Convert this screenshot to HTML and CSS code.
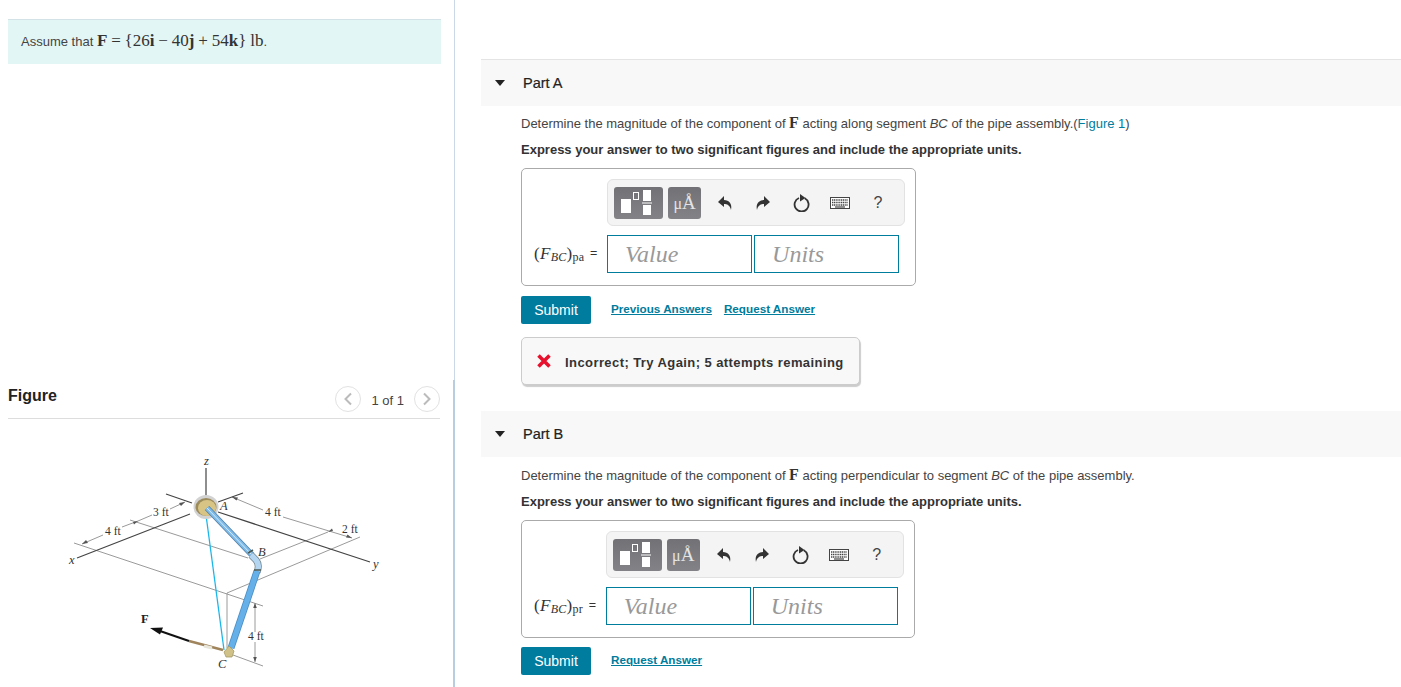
FILE: index.html
```html
<!DOCTYPE html>
<html lang="en">
<head>
<meta charset="utf-8">
<title>Part A and Part B</title>
<link rel="stylesheet" href="styles.css">
</head>
<body>
<div class="page">
  <aside class="left">
    <section class="intro">
      <div class="assume">Assume that <span class="math"><b>F</b> <span class="op">=</span> {26<b>i</b> <span class="op">−</span> 40<b>j</b> <span class="op">+</span> 54<b>k</b>} lb</span>.</div>
    </section>
    <section class="figure">
      <header class="fig-head">
        <h2>Figure</h2>
        <div class="pager">
          <span class="circle"><svg width="10" height="14" viewBox="0 0 10 14"><path d="M8 1.500 2.500 7 8 12.500" fill="none" stroke="#bbb" stroke-width="2"/></svg></span>
          <span class="count">1 of 1</span>
          <span class="circle"><svg width="10" height="14" viewBox="0 0 10 14"><path d="M2 1.500 7.500 7 2 12.500" fill="none" stroke="#bbb" stroke-width="2"/></svg></span>
        </div>
      </header>
      <svg class="diagram" width="432" height="247" viewBox="8 0 432 247">
        <g fill="none" stroke="#9a9a9a" stroke-width="1">
          <path d="M74 103 263 166M130 80 248 118M233 215 263 226M260 119 328 92M227 153 360 97M227 153V208"/>
          <path d="M82 104 103 95M122 87 138 81 152 75M170 69 185 62M232 57 263 70M283 77 352 98M255 163V192M255 202V222"/>
        </g>
        <path d="M82 104l6-1-2-3zM352 98l-6-.5 1.500-3zM232 57l6 .5-1.500 3zM185 62l-6 1 2 3zM255 163l-1.800 5h3.600zM255 222l-1.800-5h3.600zM138 81l-5 1 1 2.500zM328 92l5-1-1-2.500z" fill="#555"/>
        <g fill="none" stroke="#444" stroke-width="1.200">
          <path d="M206 28V57M166 54 192 63M218 72 370 122M77 118 190 74M218 62 243 53"/>
        </g>
        <path d="M206 75 224 210" stroke="#1cb6ea" stroke-width="1.300" fill="none"/>
        <ellipse cx="206" cy="67" rx="12.500" ry="12" fill="#d2d2d2"/>
        <ellipse cx="206" cy="67" rx="10.500" ry="9" fill="#9c8c5c"/>
        <ellipse cx="207" cy="68" rx="9" ry="8" fill="#d8c585"/>
        <path d="M207 68 252 115" stroke="#4d7da6" stroke-width="6" fill="none"/>
        <path d="M207 68 252 115" stroke="#7fbbe8" stroke-width="4.600" fill="none"/>
        <path d="M207 68 252 115" stroke="#d4e9f8" stroke-width="1" fill="none"/>
        <path d="M251 115 256 120Q260 125 257 132" stroke="#6d7f88" stroke-width="7" fill="none"/>
        <path d="M251 115 256 120Q260 125 257 132" stroke="#b4d6f1" stroke-width="5.600" fill="none"/>
        <path d="M257 131 231 208" stroke="#4a8dc4" stroke-width="7" fill="none"/>
        <path d="M257 131 231 208" stroke="#66b0ea" stroke-width="5.400" fill="none"/>
        <path d="M254 130h7M248 113l5-3" stroke="#4b5a52" stroke-width="1.600"/>
        <path d="M223 210 189 201" stroke="#a0845c" stroke-width="2.500" fill="none"/>
        <path d="M212 208 204 206" stroke="#e8e6da" stroke-width="3" fill="none"/>
        <path d="M189 201 160 191" stroke="#111" stroke-width="2" fill="none"/>
        <path d="M150 188l13-.5-3 7z" fill="#111"/>
        <path d="M224 212l5-6 5 5-2 6-6 0z" fill="#cfc188" stroke="#a69a66" stroke-width=".8"/>
        <g class="fig-label">
          <text x="153" y="76">3 ft</text>
          <text x="105" y="95">4 ft</text>
          <text x="265" y="76">4 ft</text>
          <text x="342" y="93">2 ft</text>
          <text x="248" y="200">4 ft</text>
        </g>
        <g class="fig-var">
          <text x="204" y="25">z</text>
          <text x="220" y="70">A</text>
          <text x="258" y="116">B</text>
          <text x="218" y="228">C</text>
          <text x="69" y="124">x</text>
          <text x="373" y="128">y</text>
        </g>
        <text class="fig-bold" x="141" y="183">F</text>
      </svg>
    </section>
  </aside>

  <main class="right">
    <section class="part">
      <header class="part-head"><span class="tri"></span><h3>Part A</h3></header>
      <div class="part-body">
        <p class="q">Determine the magnitude of the component of <b class="mb">F</b> acting along segment <i>BC</i> of the pipe assembly.(<a class="fig-link" href="#">Figure 1</a>)</p>
        <p class="q strong">Express your answer to two significant figures and include the appropriate units.</p>
        <div class="answer">
          <div></div>
          <div class="toolbar">
            <span class="tbtn t1"><svg width="49" height="32" viewBox="0 0 49 32"><path fill="#fff" d="M7 12h10v14H7zM29 3h8v11H29zM29 18h8v10H29z"/><path fill="#fff" d="M19 5h6v8h-6zM20 6v6h4V6z" fill-rule="evenodd"/><path stroke="#fff" d="M28 16h10"/></svg></span>
            <span class="tbtn t2"><span class="mu">μ</span>Å</span>
            <span class="tools">
              <svg width="16" height="16" viewBox="1 0 16 16"><path fill="#333" d="M7 1 1 7l6 5V9c3 0 6 1 7 6 1.500-6-2-10-7-10z"/></svg>
              <svg width="16" height="16" viewBox="1 0 16 16"><path fill="#333" d="M9 1l6 6-6 5V9c-3 0-6 1-7 6-1.500-6 2-10 7-10z"/></svg>
              <svg width="18" height="18" viewBox="0 0 18 18"><path fill="none" stroke="#333" stroke-width="1.800" d="M11.800 4.300A7 7 0 1 1 6 4"/><path fill="#333" d="M7 0v7.500L12.500 4z"/></svg>
              <svg width="20" height="12" viewBox="0 0 20 12"><rect x=".5" y=".5" width="19" height="11" fill="#fff" stroke="#444"/><path stroke="#444" stroke-width="1.400" stroke-dasharray="1.200 .6" d="M2 3h16M2 5.500h16M2 8h16"/><path stroke="#444" stroke-width="1.200" d="M5 10h10"/></svg>
              <span class="help">?</span>
            </span>
          </div>
          <div class="label math-label">(<i>F</i><sub><i>BC</i></sub>)<sub>pa</sub> <span class="eq">=</span></div>
          <div class="inputs">
            <span class="field">Value</span>
            <span class="field">Units</span>
          </div>
        </div>
        <div class="actions">
          <button class="submit">Submit</button>
          <a class="link" href="#">Previous Answers</a>
          <a class="link" href="#">Request Answer</a>
        </div>
        <div class="feedback">
          <svg width="14" height="14" viewBox="0 0 14 14"><path stroke="#e8112d" stroke-width="3.600" d="M1.500 1.500l11 11M12.500 1.500l-11 11"/></svg>
          <span class="feedback-text">Incorrect; Try Again; 5 attempts remaining</span>
        </div>
      </div>
    </section>

    <section class="part part-b">
      <header class="part-head"><span class="tri"></span><h3>Part B</h3></header>
      <div class="part-body">
        <p class="q">Determine the magnitude of the component of <b class="mb">F</b> acting perpendicular to segment <i>BC</i> of the pipe assembly.</p>
        <p class="q strong">Express your answer to two significant figures and include the appropriate units.</p>
        <div class="answer">
          <div></div>
          <div class="toolbar">
            <span class="tbtn t1"><svg width="49" height="32" viewBox="0 0 49 32"><path fill="#fff" d="M7 12h10v14H7zM29 3h8v11H29zM29 18h8v10H29z"/><path fill="#fff" d="M19 5h6v8h-6zM20 6v6h4V6z" fill-rule="evenodd"/><path stroke="#fff" d="M28 16h10"/></svg></span>
            <span class="tbtn t2"><span class="mu">μ</span>Å</span>
            <span class="tools">
              <svg width="16" height="16" viewBox="1 0 16 16"><path fill="#333" d="M7 1 1 7l6 5V9c3 0 6 1 7 6 1.500-6-2-10-7-10z"/></svg>
              <svg width="16" height="16" viewBox="1 0 16 16"><path fill="#333" d="M9 1l6 6-6 5V9c-3 0-6 1-7 6-1.500-6 2-10 7-10z"/></svg>
              <svg width="18" height="18" viewBox="0 0 18 18"><path fill="none" stroke="#333" stroke-width="1.800" d="M11.800 4.300A7 7 0 1 1 6 4"/><path fill="#333" d="M7 0v7.500L12.500 4z"/></svg>
              <svg width="20" height="12" viewBox="0 0 20 12"><rect x=".5" y=".5" width="19" height="11" fill="#fff" stroke="#444"/><path stroke="#444" stroke-width="1.400" stroke-dasharray="1.200 .6" d="M2 3h16M2 5.500h16M2 8h16"/><path stroke="#444" stroke-width="1.200" d="M5 10h10"/></svg>
              <span class="help">?</span>
            </span>
          </div>
          <div class="label math-label">(<i>F</i><sub><i>BC</i></sub>)<sub>pr</sub> <span class="eq">=</span></div>
          <div class="inputs">
            <span class="field">Value</span>
            <span class="field">Units</span>
          </div>
        </div>
        <div class="actions">
          <button class="submit">Submit</button>
          <a class="link" href="#">Request Answer</a>
        </div>
      </div>
    </section>
  </main>
</div>
</body>
</html>
```
FILE: styles.css
```css
* { box-sizing: border-box; }
html, body { margin: 0; height: 100%; overflow: hidden; background: #fff; }
body { font-family: "Liberation Sans", Arial, sans-serif; color: #333; }
.page { display: flex; height: 687px; overflow: hidden; }

.left { width: 455px; flex: none; display: flex; flex-direction: column; }
.intro { height: 380px; padding: 19px 13px 0 8px; border-right: 1px solid #c9d7e6; }
.assume { height: 45px; background: #e3f6f6; border-top: 1px solid #d3e2e6; padding: 10px 13px 0; font-size: 13px; line-height: 22px; color: #444; }
.math { font-family: "Liberation Serif", serif; font-size: 17px; color: #333; word-spacing: -.4px; }
.figure { flex: 1; padding-left: 8px; border-right: 2px solid #b9cde0; overflow: hidden; }
.fig-head { width: 432px; height: 39px; border-bottom: 1px solid #ddd; display: flex; justify-content: space-between; align-items: center; }
.fig-head h2 { margin: 0 0 6px; font-size: 16px; font-weight: 700; color: #222; }
.pager { display: flex; align-items: center; gap: 10px; }
.circle { width: 26px; height: 26px; border: 1px solid #e2e2e2; border-radius: 50%; display: flex; align-items: center; justify-content: center; }
.count { font-size: 13px; color: #444; margin-top: 3px; }
.diagram { display: block; margin-top: 21px; }
.fig-label text { font-family: "Liberation Serif", serif; font-size: 11.500px; fill: #333; }
.fig-var text { font-family: "Liberation Serif", serif; font-style: italic; font-size: 12.500px; fill: #333; }
.fig-bold { font-family: "Liberation Serif", serif; font-weight: 700; font-size: 12.500px; fill: #222; }

.right { flex: 1; padding: 59px 0 0 26px; min-width: 0; }
.part-head { height: 47px; background: #f8f8f8; border-top: 1px solid #e4e4e4; display: flex; align-items: center; padding-left: 14px; }
.tri { width: 0; height: 0; border-left: 5px solid transparent; border-right: 5px solid transparent; border-top: 6px solid #222; margin-right: 18px; }
.part-head h3 { margin: 0; font-size: 14.500px; font-weight: 400; color: #222; -webkit-text-stroke: .2px #222; }
.part-body { padding: 8px 0 0 40px; }
.q { margin: 0; font-size: 13px; line-height: 18px; color: #444; }
.q + .q { margin-top: 8px; }
.strong { font-weight: 700; font-size: 13px; color: #333; }
.mb { font-family: "Liberation Serif", serif; font-size: 16px; color: #333; }
.fig-link { color: #007c9c; text-decoration: none; }

.answer { margin-top: 9px; width: fit-content; display: grid; grid-template-columns: auto 298px; border: 1px solid #aaa; border-radius: 5px; padding: 10px 10px 12px 12px; row-gap: 9px; }
.toolbar { height: 47px; background: #f4f4f4; border: 1px solid #e2e2e2; border-radius: 6px; display: flex; align-items: center; padding-left: 6px; gap: 5px; }
.tbtn { height: 32px; border-radius: 3px; background: linear-gradient(#727276, #838387); display: flex; align-items: center; justify-content: center; }
.t1 { width: 49px; }
.t2 { width: 33px; color: #e4e4e4; font-family: "Liberation Serif", serif; font-size: 19px; }
.mu { font-size: 16px; align-self: flex-end; margin-bottom: 6px; }
.tools { margin-left: 1px; display: grid; grid-template-columns: repeat(5, 38px); align-items: center; justify-items: center; }
.help { font-size: 16px; color: #444; }
.label { align-self: center; padding-right: 9.400px; white-space: nowrap; }
.math-label { font-family: "Liberation Serif", serif; font-size: 17px; color: #333; letter-spacing: .3px; }
.math-label sub { font-size: 12px; line-height: 0; vertical-align: -2px; }
.eq { font-family: "Liberation Sans", sans-serif; font-size: 12.500px; margin-left: 1px; vertical-align: 2px; }
.inputs { display: flex; gap: 2px; }
.field { width: 145px; height: 38px; border: 1px solid #007c9c; padding-left: 17px; font-family: "Liberation Serif", serif; font-style: italic; font-size: 24px; line-height: 37px; color: #999; }

.actions { margin-top: 10px; display: flex; align-items: flex-start; gap: 12px; }
.part-b .actions { margin-top: 9px; }
.submit { width: 70px; height: 28px; margin-right: 8px; border: 0; border-radius: 2px; background: #007c9f; color: #fff; font-family: "Liberation Sans", sans-serif; font-size: 14px; padding: 0; }
.link { font-size: 11.700px; line-height: 26px; font-weight: 700; color: #007c9c; }
.feedback { margin-top: 13px; width: 339px; height: 48px; background: #f8f8f8; border: 1px solid #ccc; border-radius: 5px; box-shadow: 1px 2px 1px #ccc; display: flex; align-items: center; padding-left: 15px; gap: 14px; font-size: 13px; font-weight: 700; color: #333; letter-spacing: .42px; }
.feedback-text { margin-top: 2px; }
.part-b { margin-top: 26px; }
.part-b .part-head { height: 46px; border-top: 0; }
.part-b .part-body { padding-top: 9px; }
```
